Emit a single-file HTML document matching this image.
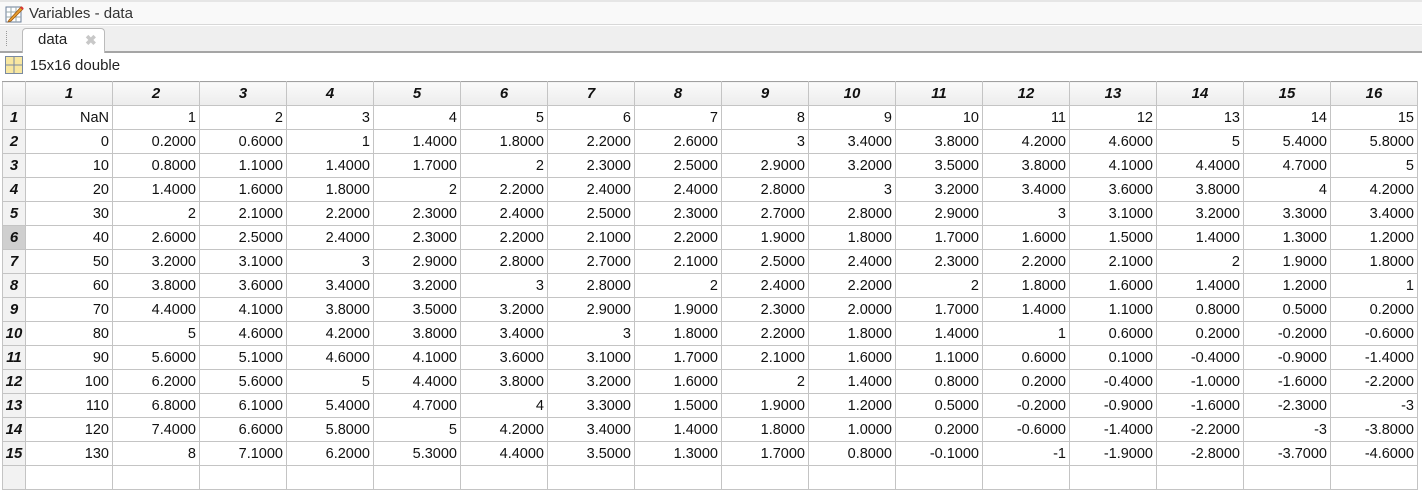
<!DOCTYPE html><html><head><style>
body{margin:0;width:1422px;height:468px;overflow:hidden;background:#fff;font-family:"Liberation Sans",sans-serif;position:relative}
.title{position:absolute;left:0;top:0;width:1422px;height:25px;background:#f9f9f9;border-top:2px solid #e6e6e6;box-sizing:border-box;border-bottom:1px solid #d8d8d8}
.title span{position:absolute;left:29px;top:3px;font-size:15px;color:#333}
.tabbar{position:absolute;left:0;top:26px;width:1422px;height:25px;background:#efefef;border-bottom:2px solid #a5a5a5}
.tab{position:absolute;left:22px;top:2px;width:83px;height:25px;background:#fff;border:1px solid #bbb;border-bottom:none;border-radius:4px 4px 0 0;box-sizing:border-box}
.tab span{position:absolute;left:15px;top:2px;font-size:15px;color:#222}
.tab i{position:absolute;left:62px;top:3px;font-style:normal;color:#c8c8c8;font-size:14px;font-weight:bold}
.info{position:absolute;left:30px;top:57px;font-size:15px;color:#222}
table{position:absolute;left:2px;top:81px;border-collapse:collapse;table-layout:fixed}
td{border:1px solid #c4c4c4;height:24px;padding:0 3px 0 0;text-align:right;font-size:14.5px;color:#111;box-sizing:border-box;white-space:nowrap;overflow:hidden}
tr:first-child td{border-top:1px solid #a0a0a0;background:linear-gradient(#fafafa,#ececec);text-align:center;font-weight:bold;font-style:italic;padding:0;font-size:15px}
td.h{background:#f2f2f2;font-weight:bold;font-style:italic;text-align:center;padding:0;font-size:15px}
td.s{background:#cfcfcf}
</style></head><body>
<div class="title"><svg style="position:absolute;left:5px;top:2px" width="19" height="19" viewBox="0 0 19 19"><rect x="1" y="3" width="15" height="15" fill="#fff" stroke="#6a7e99"/><path d="M1 8h15M1 13h15M6 3v15M11 3v15" stroke="#9aa" stroke-width="1"/><path d="M4 16 L16 3 L18 5 L6 17 L3 18Z" fill="#e8a030" stroke="#a05a10" stroke-width=".8"/><path d="M16 3l2 2" stroke="#d33" stroke-width="2"/></svg><span>Variables - data</span></div>
<div class="tabbar"><div style="position:absolute;left:6px;top:5px;width:2px;height:15px;border-left:1px dotted #999"></div><div class="tab"><span>data</span><i>✖</i></div></div>
<svg style="position:absolute;left:5px;top:56px" width="18" height="18" viewBox="0 0 18 18"><rect x=".5" y=".5" width="17" height="17" fill="#f8e7a0" stroke="#7a8aa0"/><path d="M9 0v18M0 9h18" stroke="#7a8aa0"/></svg>
<div class="info">15x16 double</div>
<table id="t"><colgroup><col style="width:23px"><col span="16" style="width:87px"></colgroup></table>
<script>
var d=[
["NaN","1","2","3","4","5","6","7","8","9","10","11","12","13","14","15"],
["0","0.2000","0.6000","1","1.4000","1.8000","2.2000","2.6000","3","3.4000","3.8000","4.2000","4.6000","5","5.4000","5.8000"],
["10","0.8000","1.1000","1.4000","1.7000","2","2.3000","2.5000","2.9000","3.2000","3.5000","3.8000","4.1000","4.4000","4.7000","5"],
["20","1.4000","1.6000","1.8000","2","2.2000","2.4000","2.4000","2.8000","3","3.2000","3.4000","3.6000","3.8000","4","4.2000"],
["30","2","2.1000","2.2000","2.3000","2.4000","2.5000","2.3000","2.7000","2.8000","2.9000","3","3.1000","3.2000","3.3000","3.4000"],
["40","2.6000","2.5000","2.4000","2.3000","2.2000","2.1000","2.2000","1.9000","1.8000","1.7000","1.6000","1.5000","1.4000","1.3000","1.2000"],
["50","3.2000","3.1000","3","2.9000","2.8000","2.7000","2.1000","2.5000","2.4000","2.3000","2.2000","2.1000","2","1.9000","1.8000"],
["60","3.8000","3.6000","3.4000","3.2000","3","2.8000","2","2.4000","2.2000","2","1.8000","1.6000","1.4000","1.2000","1"],
["70","4.4000","4.1000","3.8000","3.5000","3.2000","2.9000","1.9000","2.3000","2.0000","1.7000","1.4000","1.1000","0.8000","0.5000","0.2000"],
["80","5","4.6000","4.2000","3.8000","3.4000","3","1.8000","2.2000","1.8000","1.4000","1","0.6000","0.2000","-0.2000","-0.6000"],
["90","5.6000","5.1000","4.6000","4.1000","3.6000","3.1000","1.7000","2.1000","1.6000","1.1000","0.6000","0.1000","-0.4000","-0.9000","-1.4000"],
["100","6.2000","5.6000","5","4.4000","3.8000","3.2000","1.6000","2","1.4000","0.8000","0.2000","-0.4000","-1.0000","-1.6000","-2.2000"],
["110","6.8000","6.1000","5.4000","4.7000","4","3.3000","1.5000","1.9000","1.2000","0.5000","-0.2000","-0.9000","-1.6000","-2.3000","-3"],
["120","7.4000","6.6000","5.8000","5","4.2000","3.4000","1.4000","1.8000","1.0000","0.2000","-0.6000","-1.4000","-2.2000","-3","-3.8000"],
["130","8","7.1000","6.2000","5.3000","4.4000","3.5000","1.3000","1.7000","0.8000","-0.1000","-1","-1.9000","-2.8000","-3.7000","-4.6000"]];
var h='<tr><td></td>';for(var c=1;c<=16;c++)h+='<td>'+c+'</td>';h+='</tr>';
d.forEach(function(r,i){h+='<tr><td class="h'+(i==5?' s':'')+'">'+(i+1)+'</td>';r.forEach(function(v){h+='<td>'+v+'</td>'});h+='</tr>'});
h+='<tr><td class="h"></td>'+'<td></td>'.repeat(16)+'</tr>';
document.getElementById('t').insertAdjacentHTML('beforeend',h);
</script>
</body></html>
